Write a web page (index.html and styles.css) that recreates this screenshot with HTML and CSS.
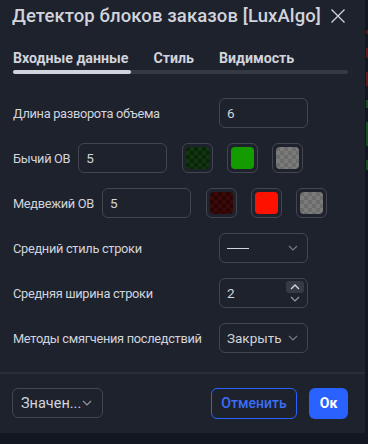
FILE: index.html
```html
<!DOCTYPE html>
<html lang="ru">
<head>
    <meta charset="UTF-8">
    <meta name="viewport" content="width=device-width, initial-scale=1.0">
    <title>Детектор блоков заказов [LuxAlgo]</title>
    <link rel="stylesheet" href="styles.css">
</head>
<body>
<div class="screen">
    <div class="dialog">
        <div class="header">
            <h1>Детектор блоков заказов [LuxAlgo]</h1>
            <span class="close">
                <svg width="16" height="16" viewBox="0 0 16 16"><path d="M1.5 1.5l13 13M14.5 1.5l-13 13" stroke="#d1d4dc" stroke-width="1.3" fill="none"/></svg>
            </span>
        </div>

        <div class="tabs">
            <div class="tab-names">
                <span class="tab active">Входные данные</span>
                <span class="tab">Стиль</span>
                <span class="tab">Видимость</span>
            </div>
            <div class="tab-bar"><div class="tab-bar-fill"></div></div>
        </div>

        <div class="content">
            <div class="row grid-row">
                <span class="label">Длина разворота объема</span>
                <div class="field">6</div>
            </div>

            <div class="row">
                <span class="label">Бычий ОВ</span>
                <div class="field">5</div>
                <div class="swatches">
                    <span class="swatch"><i class="dark-green"></i></span>
                    <span class="swatch"><i class="green"></i></span>
                    <span class="swatch"><i class="gray"></i></span>
                </div>
            </div>

            <div class="row">
                <span class="label">Медвежий ОВ</span>
                <div class="field">5</div>
                <div class="swatches">
                    <span class="swatch"><i class="dark-red"></i></span>
                    <span class="swatch"><i class="red"></i></span>
                    <span class="swatch"><i class="gray"></i></span>
                </div>
            </div>

            <div class="row grid-row">
                <span class="label">Средний стиль строки</span>
                <div class="field select">
                    <span class="line-sample"></span>
                    <svg class="chevron" width="10" height="6" viewBox="0 0 10 6"><path d="M1 1l4 4 4-4" stroke="#787b86" stroke-width="1.2" fill="none"/></svg>
                </div>
            </div>

            <div class="row grid-row">
                <span class="label">Средняя ширина строки</span>
                <div class="field number">
                    <span>2</span>
                    <span class="spin">
                        <span class="spin-up"><svg width="10" height="6" viewBox="0 0 10 6"><path d="M1 5l4-4 4 4" stroke="#d1d4dc" stroke-width="1.4" fill="none"/></svg></span>
                        <span class="spin-down"><svg width="10" height="6" viewBox="0 0 10 6"><path d="M1 1l4 4 4-4" stroke="#9598a1" stroke-width="1.2" fill="none"/></svg></span>
                    </span>
                </div>
            </div>

            <div class="row grid-row">
                <span class="label">Методы смягчения последствий</span>
                <div class="field select">
                    <span>Закрыть</span>
                    <svg class="chevron" width="10" height="6" viewBox="0 0 10 6"><path d="M1 1l4 4 4-4" stroke="#787b86" stroke-width="1.2" fill="none"/></svg>
                </div>
            </div>
        </div>

        <div class="footer">
            <div class="field select defaults">
                <span>Значен...</span>
                <svg class="chevron" width="10" height="6" viewBox="0 0 10 6"><path d="M1 1l4 4 4-4" stroke="#9598a1" stroke-width="1.2" fill="none"/></svg>
            </div>
            <div class="buttons">
                <button class="btn cancel">Отменить</button>
                <button class="btn ok">Ок</button>
            </div>
        </div>
    </div>
    <div class="chart-edge">
        <i class="c-red" style="height: 4px"></i>
        <i class="c-red" style="height: 10px"></i>
        <i class="c-red" style="height: 14px"></i>
        <i class="c-green" style="height: 8px"></i>
        <i class="c-green" style="height: 24px"></i>
        <i class="c-green" style="height: 10px"></i>
    </div>
</div>
</body>
</html>
```

FILE: styles.css
```css
body {
    margin: 0;
    padding: 0;
    background: #131722;
    font-family: Roboto, "Noto Sans", sans-serif;
    color: #d1d4dc;
}
.screen {
    display: flex;
    width: 368px;
    height: 444px;
    overflow: hidden;
}
.dialog {
    width: 365px;
    height: 433px;
    background: #1e222d;
    display: flex;
    flex-direction: column;
    flex-shrink: 0;
}
.header {
    display: flex;
    align-items: center;
    height: 32px;
    padding: 0 12px;
}
h1 {
    margin: 0;
    font-size: 18.5px;
    font-weight: 500;
    color: #d1d4dc;
    white-space: nowrap;
    letter-spacing: 0.1px;
}
.close {
    display: flex;
    margin-left: 9px;
    margin-top: -1px;
}
.tabs {
    padding: 17px 17px 0 13px;
}
.tab-names {
    display: flex;
    gap: 25px;
    font-size: 14.2px;
    font-weight: 700;
    color: #d1d4dc;
    height: 18px;
    line-height: 18px;
}
.tab-bar {
    margin-top: 3px;
    height: 4px;
    border-radius: 2px;
    background: #363a45;
}
.tab-bar-fill {
    width: 118px;
    height: 4px;
    border-radius: 2px;
    background: #d1d4dc;
}
.content {
    padding: 24px 0 0 13px;
    display: flex;
    flex-direction: column;
    gap: 15px;
    flex: 1;
}
.row {
    display: flex;
    align-items: center;
    height: 30px;
}
.label {
    font-size: 12.8px;
    letter-spacing: -0.3px;
    color: #d1d4dc;
    white-space: nowrap;
    margin-right: 8px;
}
.grid-row .label {
    width: 206px;
    margin-right: 0;
}
.field {
    box-sizing: border-box;
    width: 89px;
    height: 30px;
    border: 1px solid #434651;
    border-radius: 6px;
    padding: 0 7px;
    display: flex;
    align-items: center;
    font-size: 13.5px;
    color: #d1d4dc;
}
.swatches {
    display: flex;
    gap: 14px;
    margin-left: 15px;
}
.swatch {
    box-sizing: border-box;
    width: 31px;
    height: 30px;
    border: 1px solid #434651;
    border-radius: 6px;
    padding: 3px;
    display: flex;
}
.swatch i {
    flex: 1;
    border-radius: 4px;
}
.dark-green {
    background: repeating-conic-gradient(#103710 0 25%, #0a2609 0 50%) 0 0 / 8px 8px;
}
.green {
    background: #149b00;
}
.dark-red {
    background: repeating-conic-gradient(#3c0909 0 25%, #290506 0 50%) 0 0 / 8px 8px;
}
.red {
    background: #ff1100;
}
.gray {
    background: repeating-conic-gradient(#7b7b7b 0 25%, #6c6c6c 0 50%) 0 0 / 8px 8px;
}
.select {
    justify-content: space-between;
}
.chevron {
    margin-right: 2px;
}
.line-sample {
    width: 22px;
    height: 1px;
    background: #d1d4dc;
}
.number {
    justify-content: space-between;
    padding-right: 3px;
}
.spin {
    display: flex;
    flex-direction: column;
    align-items: center;
}
.spin-up {
    width: 18px;
    height: 12px;
    background: #363a45;
    border-radius: 3px;
    display: flex;
    align-items: center;
    justify-content: center;
}
.spin-down {
    height: 12px;
    display: flex;
    align-items: center;
}
.footer {
    border-top: 2px solid #2a2e39;
    height: 58px;
    padding: 0 17px 0 12px;
    display: flex;
    align-items: center;
    justify-content: space-between;
    margin-bottom: 1px;
}
.defaults {
    width: 91px;
    font-size: 14.5px;
    padding: 0 8px;
}
.buttons {
    display: flex;
    gap: 12px;
}
.btn {
    height: 31px;
    border-radius: 6px;
    font-family: Roboto, sans-serif;
    font-size: 14px;
    font-weight: 500;
    padding: 0;
}
.cancel {
    width: 86px;
    background: transparent;
    border: 1px solid #2962ff;
    color: #3a6ff8;
}
.ok {
    width: 39px;
    background: #2962ff;
    border: none;
    color: #fff;
    font-weight: 700;
}
.chart-edge {
    display: flex;
    flex-direction: column;
    gap: 14px;
    padding: 30px 0 0 1px;
}
.chart-edge i {
    display: block;
    width: 2px;
}
.c-red {
    background: #5a1a1f;
}
.c-green {
    background: #1a4d26;
}
```
